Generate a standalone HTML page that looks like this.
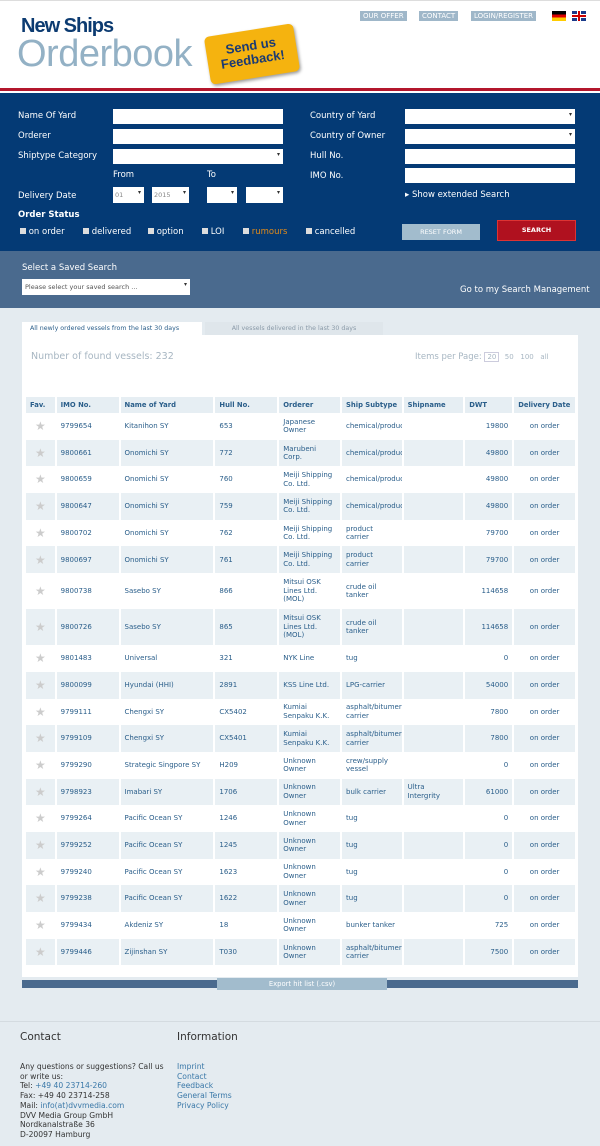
<!DOCTYPE html>
<html><head><meta charset="utf-8">
<style>
*{margin:0;padding:0;box-sizing:border-box}
body{width:600px;height:1146px;background:#e4ebf0;font-family:"DejaVu Sans","Liberation Sans",sans-serif;position:relative;overflow:hidden}
.abs{position:absolute}
#hdr{left:0;top:0;width:600px;height:94px;background:#fff;border-top:1px solid #ddd}
.red{left:0;top:88px;width:600px;height:3px;background:#b3162c}
.navy{left:0;top:93px;width:600px;height:158px;background:#043a75}
.saved{left:0;top:251px;width:600px;height:57px;background:#4a6a8e}
.lbl{color:#fff;font-size:8.5px}
.inp{background:#fff;height:15px}
.sel:after{content:"▾";position:absolute;right:3px;top:2px;font-size:6px;color:#333}
.navbtn{background:#9fb7c9;color:#fff;font-size:7px;height:10px;line-height:10px;padding:0 3px;top:11px}
table{border-collapse:separate;border-spacing:2px 0;font-size:7px;color:#2a5e8a;table-layout:fixed}
td,th{padding:0 4px;vertical-align:middle;text-align:left;overflow:hidden;white-space:normal}
th{background:#e6eef3;color:#2a5e8a;height:16px;font-size:6.8px;font-weight:bold;white-space:nowrap}
tr.o td{background:#fff}
tr.e td{background:#e9f0f4}
td{height:26.7px;line-height:8.5px}
tr.t td{height:36px}
.star{color:#ccc;font-size:12px;text-align:center}
.r{text-align:right}
.c{text-align:center}
.nw{white-space:nowrap}
.ft{font-size:7.6px;color:#333;line-height:9.7px}
.ft a{color:#3a78a8;text-decoration:none}
</style></head><body>
<div id="hdr" class="abs"></div>
<div class="abs" style="left:21px;top:15px;font-family:'Liberation Sans',sans-serif;font-weight:bold;font-size:20px;color:#0c3b71;letter-spacing:-1px">New Ships</div>
<div class="abs" style="left:17px;top:33px;font-family:'Liberation Sans',sans-serif;font-size:38px;color:#93b1c5;letter-spacing:-0.5px">Orderbook</div>
<div class="abs" style="left:207px;top:30px;width:90px;height:48px;background:#f5b30f;border-radius:5px;transform:rotate(-9deg);box-shadow:1px 2px 3px rgba(0,0,0,.4);color:#1b3a73;font-family:'Liberation Sans',sans-serif;font-weight:bold;font-size:13px;text-align:center;line-height:14px;padding-top:9px">Send us<br>Feedback!</div>
<div class="abs navbtn" style="left:360px">OUR OFFER</div>
<div class="abs navbtn" style="left:419px">CONTACT</div>
<div class="abs navbtn" style="left:471px">LOGIN/REGISTER</div>
<div class="abs" style="left:552px;top:11px;width:14px;height:10px;background:linear-gradient(#000 33%,#d00 33%,#d00 66%,#fc0 66%)"></div>
<div class="abs" style="left:572px;top:11px;width:14px;height:10px;background:#1a3a8a"><div style="position:absolute;left:5px;top:0;width:4px;height:10px;background:#fff"></div><div style="position:absolute;left:0;top:3px;width:14px;height:4px;background:#fff"></div><div style="position:absolute;left:6px;top:0;width:2px;height:10px;background:#c00"></div><div style="position:absolute;left:0;top:4px;width:14px;height:2px;background:#c00"></div></div>
<div class="abs red"></div>
<div class="abs navy"></div>

<div class="abs lbl" style="left:18px;top:111px">Name Of Yard</div>
<div class="abs inp" style="left:113px;top:109px;width:170px"></div>
<div class="abs lbl" style="left:18px;top:131px">Orderer</div>
<div class="abs inp" style="left:113px;top:129px;width:170px"></div>
<div class="abs lbl" style="left:18px;top:151px">Shiptype Category</div>
<div class="abs inp sel" style="left:113px;top:149px;width:170px"></div>
<div class="abs lbl" style="left:113px;top:170px">From</div>
<div class="abs lbl" style="left:207px;top:170px">To</div>
<div class="abs lbl" style="left:18px;top:191px">Delivery Date</div>
<div class="abs inp sel" style="left:113px;top:187px;width:31px;font-size:6.5px;color:#888;padding:4px 2px;height:16px">01</div>
<div class="abs inp sel" style="left:152px;top:187px;width:37px;font-size:6.5px;color:#888;padding:4px 2px;height:16px">2015</div>
<div class="abs inp sel" style="left:207px;top:187px;width:30px;height:16px"></div>
<div class="abs inp sel" style="left:246px;top:187px;width:37px;height:16px"></div>
<div class="abs lbl" style="left:18px;top:210px;font-weight:bold">Order Status</div>
<div class="abs lbl" style="left:20px;top:227px"><span style="display:inline-block;width:6px;height:6px;background:#ddd"></span> on order</div>
<div class="abs lbl" style="left:83px;top:227px"><span style="display:inline-block;width:6px;height:6px;background:#ddd"></span> delivered</div>
<div class="abs lbl" style="left:148px;top:227px"><span style="display:inline-block;width:6px;height:6px;background:#ddd"></span> option</div>
<div class="abs lbl" style="left:202px;top:227px"><span style="display:inline-block;width:6px;height:6px;background:#ddd"></span> LOI</div>
<div class="abs lbl" style="left:243px;top:227px"><span style="display:inline-block;width:6px;height:6px;background:#ddd"></span> <span style="color:#e08a1a">rumours</span></div>
<div class="abs lbl" style="left:306px;top:227px"><span style="display:inline-block;width:6px;height:6px;background:#ddd"></span> cancelled</div>

<div class="abs lbl" style="left:310px;top:111px">Country of Yard</div>
<div class="abs inp sel" style="left:405px;top:109px;width:170px"></div>
<div class="abs lbl" style="left:310px;top:131px">Country of Owner</div>
<div class="abs inp sel" style="left:405px;top:129px;width:170px"></div>
<div class="abs lbl" style="left:310px;top:151px">Hull No.</div>
<div class="abs inp" style="left:405px;top:149px;width:170px"></div>
<div class="abs lbl" style="left:310px;top:171px">IMO No.</div>
<div class="abs inp" style="left:405px;top:168px;width:170px"></div>
<div class="abs lbl" style="left:405px;top:190px">▸ Show extended Search</div>
<div class="abs" style="left:402px;top:224px;width:78px;height:16px;background:#a2bccd;color:#fff;font-size:6.5px;text-align:center;line-height:16px">RESET FORM</div>
<div class="abs" style="left:497px;top:220px;width:79px;height:21px;background:#b0111f;border:1px solid #d33;color:#fff;font-size:6.5px;font-weight:bold;text-align:center;line-height:19px">SEARCH</div>

<div class="abs saved"></div>
<div class="abs lbl" style="left:22px;top:263px">Select a Saved Search</div>
<div class="abs inp sel" style="left:22px;top:279px;width:168px;height:16px;font-size:6.5px;color:#555;padding:4px 3px">Please select your saved search ...</div>
<div class="abs lbl" style="left:460px;top:285px">Go to my Search Management</div>

<div class="abs" style="left:22px;top:322px;width:180px;height:14px;background:#fff;font-size:6.3px;color:#2a5e8a;padding:3px 8px">All newly ordered vessels from the last 30 days</div>
<div class="abs" style="left:205px;top:322px;width:178px;height:13px;background:#dfe6eb;font-size:6.3px;color:#8a9aa8;text-align:center;padding-top:3px">All vessels delivered in the last 30 days</div>
<div class="abs" style="left:22px;top:335px;width:556px;height:642px;background:#fff"></div>
<div class="abs" style="left:31px;top:351px;font-size:9.5px;color:#a7b6c2">Number of found vessels: 232</div>
<div class="abs" style="left:415px;top:352px;font-size:8.5px;color:#a7b6c2">Items per Page: <span style="border:1px solid #ccd;padding:0 2px;font-size:7px">20</span>&nbsp; <span style="font-size:7px">50 &nbsp; 100 &nbsp; all</span></div>

<table class="abs" style="left:24px;top:397px;width:553px">
<colgroup><col style="width:25px"><col style="width:54px"><col style="width:81px"><col style="width:54px"><col style="width:53px"><col style="width:52px"><col style="width:52px"><col style="width:41px"><col style="width:53px"></colgroup>
<tr><th>Fav.</th><th>IMO No.</th><th>Name of Yard</th><th>Hull No.</th><th>Orderer</th><th>Ship Subtype</th><th>Shipname</th><th>DWT</th><th>Delivery Date</th></tr>
<tr class="o"><td class="star">★</td><td>9799654</td><td>Kitanihon SY</td><td>653</td><td>Japanese Owner</td><td class="nw">chemical/produc</td><td></td><td class="r">19800</td><td class="c">on order</td></tr>
<tr class="e"><td class="star">★</td><td>9800661</td><td>Onomichi SY</td><td>772</td><td>Marubeni Corp.</td><td class="nw">chemical/produc</td><td></td><td class="r">49800</td><td class="c">on order</td></tr>
<tr class="o"><td class="star">★</td><td>9800659</td><td>Onomichi SY</td><td>760</td><td>Meiji Shipping Co. Ltd.</td><td class="nw">chemical/produc</td><td></td><td class="r">49800</td><td class="c">on order</td></tr>
<tr class="e"><td class="star">★</td><td>9800647</td><td>Onomichi SY</td><td>759</td><td>Meiji Shipping Co. Ltd.</td><td class="nw">chemical/produc</td><td></td><td class="r">49800</td><td class="c">on order</td></tr>
<tr class="o"><td class="star">★</td><td>9800702</td><td>Onomichi SY</td><td>762</td><td>Meiji Shipping Co. Ltd.</td><td>product carrier</td><td></td><td class="r">79700</td><td class="c">on order</td></tr>
<tr class="e"><td class="star">★</td><td>9800697</td><td>Onomichi SY</td><td>761</td><td>Meiji Shipping Co. Ltd.</td><td>product carrier</td><td></td><td class="r">79700</td><td class="c">on order</td></tr>
<tr class="o t"><td class="star">★</td><td>9800738</td><td>Sasebo SY</td><td>866</td><td>Mitsui OSK Lines Ltd. (MOL)</td><td>crude oil tanker</td><td></td><td class="r">114658</td><td class="c">on order</td></tr>
<tr class="e t"><td class="star">★</td><td>9800726</td><td>Sasebo SY</td><td>865</td><td>Mitsui OSK Lines Ltd. (MOL)</td><td>crude oil tanker</td><td></td><td class="r">114658</td><td class="c">on order</td></tr>
<tr class="o"><td class="star">★</td><td>9801483</td><td>Universal</td><td>321</td><td>NYK Line</td><td>tug</td><td></td><td class="r">0</td><td class="c">on order</td></tr>
<tr class="e"><td class="star">★</td><td>9800099</td><td>Hyundai (HHI)</td><td>2891</td><td>KSS Line Ltd.</td><td>LPG-carrier</td><td></td><td class="r">54000</td><td class="c">on order</td></tr>
<tr class="o"><td class="star">★</td><td>9799111</td><td>Chengxi SY</td><td>CX5402</td><td>Kumiai Senpaku K.K.</td><td>asphalt/bitumer carrier</td><td></td><td class="r">7800</td><td class="c">on order</td></tr>
<tr class="e"><td class="star">★</td><td>9799109</td><td>Chengxi SY</td><td>CX5401</td><td>Kumiai Senpaku K.K.</td><td>asphalt/bitumer carrier</td><td></td><td class="r">7800</td><td class="c">on order</td></tr>
<tr class="o"><td class="star">★</td><td>9799290</td><td class="nw">Strategic Singpore SY</td><td>H209</td><td>Unknown Owner</td><td>crew/supply vessel</td><td></td><td class="r">0</td><td class="c">on order</td></tr>
<tr class="e"><td class="star">★</td><td>9798923</td><td>Imabari SY</td><td>1706</td><td>Unknown Owner</td><td>bulk carrier</td><td>Ultra Intergrity</td><td class="r">61000</td><td class="c">on order</td></tr>
<tr class="o"><td class="star">★</td><td>9799264</td><td>Pacific Ocean SY</td><td>1246</td><td>Unknown Owner</td><td>tug</td><td></td><td class="r">0</td><td class="c">on order</td></tr>
<tr class="e"><td class="star">★</td><td>9799252</td><td>Pacific Ocean SY</td><td>1245</td><td>Unknown Owner</td><td>tug</td><td></td><td class="r">0</td><td class="c">on order</td></tr>
<tr class="o"><td class="star">★</td><td>9799240</td><td>Pacific Ocean SY</td><td>1623</td><td>Unknown Owner</td><td>tug</td><td></td><td class="r">0</td><td class="c">on order</td></tr>
<tr class="e"><td class="star">★</td><td>9799238</td><td>Pacific Ocean SY</td><td>1622</td><td>Unknown Owner</td><td>tug</td><td></td><td class="r">0</td><td class="c">on order</td></tr>
<tr class="o"><td class="star">★</td><td>9799434</td><td>Akdeniz SY</td><td>18</td><td>Unknown Owner</td><td>bunker tanker</td><td></td><td class="r">725</td><td class="c">on order</td></tr>
<tr class="e"><td class="star">★</td><td>9799446</td><td>Zijinshan SY</td><td>T030</td><td>Unknown Owner</td><td>asphalt/bitumer carrier</td><td></td><td class="r">7500</td><td class="c">on order</td></tr>
</table>

<div class="abs" style="left:22px;top:980px;width:556px;height:8px;background:#4a6a8e"></div>
<div class="abs" style="left:217px;top:978px;width:170px;height:12px;background:#a2bccd;color:#fff;font-size:6.8px;text-align:center;line-height:12px">Export hit list (.csv)</div>
<div class="abs" style="left:0;top:1021px;width:600px;height:1px;background:#d4dbe0"></div>
<div class="abs" style="left:20px;top:1031px;font-size:10.5px;color:#333">Contact</div>
<div class="abs" style="left:177px;top:1031px;font-size:10.5px;color:#333">Information</div>
<div class="abs ft" style="left:20px;top:1062px;width:145px">Any questions or suggestions? Call us or write us:<br>Tel: <a>+49 40 23714-260</a><br>Fax: +49 40 23714-258<br>Mail: <a>info(at)dvvmedia.com</a><br>DVV Media Group GmbH<br>Nordkanalstraße 36<br>D-20097 Hamburg</div>
<div class="abs ft" style="left:177px;top:1062px"><a>Imprint</a><br><a>Contact</a><br><a>Feedback</a><br><a>General Terms</a><br><a>Privacy Policy</a></div>
</body></html>
